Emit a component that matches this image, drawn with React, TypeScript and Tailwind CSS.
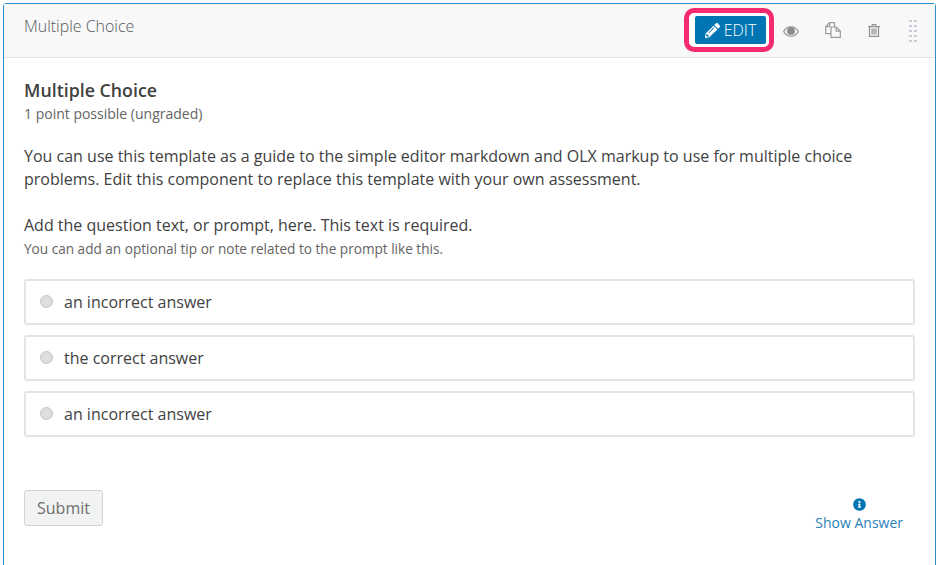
import { FaInfoCircle, FaPencilAlt } from 'react-icons/fa';

const ANSWERS = ['an incorrect answer', 'the correct answer', 'an incorrect answer'];

function Grip() {
  return (
    <div className="grid w-[8px] grid-cols-2 gap-x-[2px] gap-y-[2.5px]">
      {Array.from({ length: 10 }).map((_, i) => (
        <span key={i} className="h-[2.5px] w-[2.5px] bg-[#c9ccd6]" />
      ))}
    </div>
  );
}

function EyeIcon() {
  return (
    <svg viewBox="0 0 16 11" className="mt-[2px] ml-[9px] h-[11px] w-[16px]">
      <path d="M0.6 5.5C2.4 2.4 5 0.8 8 0.8s5.6 1.6 7.4 4.7C13.6 8.6 11 10.2 8 10.2S2.4 8.6 0.6 5.5Z" fill="#f1f1f1" stroke="#8a8c8f" strokeWidth="1.1" />
      <circle cx="8" cy="4.9" r="3.9" fill="#8a8c8f" />
    </svg>
  );
}

function FilesIcon() {
  return (
    <svg viewBox="0 0 16 16" fill="none" stroke="#9a9a98" strokeWidth="1.2" className="ml-[26px] h-[16px] w-[16px]">
      <path d="M9.5 5V0.7H4.6L0.7 4.6V11.6H6" />
      <path d="M4.6 0.7V4.6H0.7" />
      <path d="M11.2 5H6V15.3H15.3V9.1L11.2 5Z" fill="#f8f8f8" />
      <path d="M11.2 5V9.1H15.3" />
    </svg>
  );
}

function TrashIcon() {
  return (
    <svg viewBox="0 0 12 13" fill="none" stroke="#8f8f8d" strokeWidth="1.2" className="ml-[27px] h-[13px] w-[12px]">
      <path d="M0 2.7H12" />
      <path d="M3.6 2.5L4.4 0.6H7.6L8.4 2.5" />
      <path d="M1.5 2.7V12.4H10.5V2.7" />
      <path d="M4.1 4.6V10.6M6 4.6V10.6M7.9 4.6V10.6" />
    </svg>
  );
}

export default function App() {
  return (
    <div className="h-[565px] w-[941px] overflow-hidden bg-white px-[3px] pt-[3px] font-['Open_Sans',sans-serif] text-[#414141]">
      <div className="h-[570px] w-[933px] rounded-[3px] border border-[#2a8fcb]">
        <div className="flex h-[54px] items-start justify-between border-b border-[#e4e4e4] bg-[#f8f8f8] pl-[20px]">
          <span className="mt-[12px] text-[15.95px] font-light leading-[20px] text-[#55585c]">Multiple Choice</span>
          <div className="mt-[4px] flex items-center pr-[18px]">
            <div className="rounded-[10px] border-[5px] border-[#f52a70] bg-white pb-[3px] pl-[6px] pr-[3px] pt-[3px]">
              <button
                type="button"
                className="flex h-[28px] w-[71px] items-center justify-center gap-[4px] rounded-[2px] bg-[#0075b4] text-[16px] font-light text-white"
              >
                <FaPencilAlt className="h-[15px] w-[15px]" />
                EDIT
              </button>
            </div>
            <EyeIcon />
            <FilesIcon />
            <TrashIcon />
            <div className="ml-[29px] mt-[2px]">
              <Grip />
            </div>
          </div>
        </div>

        <div className="px-[20px] pt-[20px]">
          <h2 className="text-[17.8px] font-semibold leading-[24px] text-[#414141]">Multiple Choice</h2>
          <p className="mt-[2px] text-[14px] leading-[20px] text-[#646464]">1 point possible (ungraded)</p>
          <p className="mt-[21px] text-[16px] leading-[23px]">
            You can use this template as a guide to the simple editor markdown and OLX markup to use for multiple choice
            problems. Edit this component to replace this template with your own assessment.
          </p>
          <p className="mt-[23px] text-[16px] leading-[23px]">Add the question text, or prompt, here. This text is required.</p>
          <p className="mt-[3px] text-[13.6px] leading-[18px] text-[#646464]">
            You can add an optional tip or note related to the prompt like this.
          </p>

          <div className="mt-[21px] flex w-[891px] flex-col gap-[10px]">
            {ANSWERS.map((answer, i) => (
              <label key={i} className="flex h-[46px] items-center rounded-[3px] border-2 border-[#e4e4e4] pl-[14px]">
                <span className="mb-[1px] h-[13px] w-[13px] rounded-full border border-[#c4c4c4] bg-[#dedede]" />
                <span className="ml-[11px] text-[16px] text-[#414141]">{answer}</span>
              </label>
            ))}
          </div>

          <div className="mt-[36px] flex items-start justify-between">
            <button
              type="button"
              className="mt-[17px] h-[36px] w-[79px] rounded-[3px] border border-[#d2d2d2] bg-[#f1f2f2] text-[16px] text-[#6e6e6e]"
            >
              Submit
            </button>
            <div className="mr-[12px] mt-[25px] flex flex-col items-center text-[#0075b4]">
              <FaInfoCircle className="h-[13px] w-[13px]" />
              <span className="mt-[2px] text-[14px] leading-[20px] text-[#2a7fb8]">Show Answer</span>
            </div>
          </div>
        </div>
      </div>
    </div>
  );
}
